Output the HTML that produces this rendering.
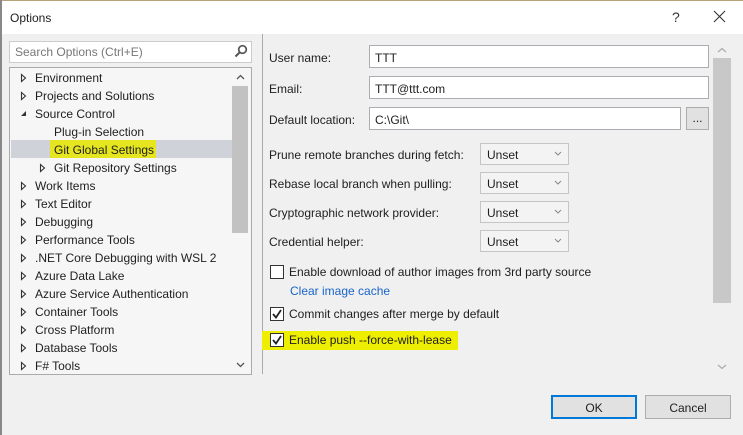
<!DOCTYPE html>
<html><head><meta charset="utf-8"><style>
*{box-sizing:border-box;margin:0;padding:0}
body{width:743px;height:435px;overflow:hidden;background:#f0f0f0;font-family:"Liberation Sans",sans-serif;font-size:12px;color:#1e1e1e;position:relative}
.a{position:absolute;white-space:nowrap}
.tb{position:absolute;background:#fff;border:1px solid #abadb3}
.dd{position:absolute;width:89px;height:22px;background:#f3f3f3;border:1px solid #c5c5c5;padding:4px 0 0 6px}
.cb{position:absolute;width:14px;height:14px;border:1px solid #333;background:#fff}
.tri{position:absolute;left:20px}
.btn{position:absolute;height:24px;background:#e1e1e1;border:1px solid #adadad;text-align:center;padding-top:5px}
</style></head><body>
<div class="a" style="left:0;top:0;width:743px;height:34px;background:#fff;border-top:1px solid #b8a47c"></div>
<div class="a" style="left:0;top:0;width:2px;height:435px;background:#888"></div>
<div class="a" style="left:10px;top:11px">Options</div>
<div class="a" style="left:672px;top:9px;font-size:14px;color:#333">?</div>
<svg class="a" style="left:713px;top:10px" width="13" height="13"><path d="M1 1L12 12M12 1L1 12" stroke="#333" stroke-width="1.1"/></svg>

<div class="tb" style="left:9px;top:41px;width:243px;height:22px;border-color:#ccc"></div>
<div class="a" style="left:15px;top:45px;color:#777">Search Options (Ctrl+E)</div>
<svg class="a" style="left:233px;top:43px" width="16" height="16"><circle cx="9.5" cy="6.5" r="3.8" fill="none" stroke="#555" stroke-width="1.7"/><line x1="7" y1="9" x2="2.5" y2="13.5" stroke="#555" stroke-width="2"/></svg>

<div class="a" style="left:9px;top:67px;width:243px;height:308px;background:#f6f6f6;border:1px solid #aaa"></div>
<div class="a" style="left:232px;top:86px;width:16px;height:147px;background:#c2c2c2"></div>
<svg class="a" style="left:236px;top:74px" width="9" height="6"><path d="M1 5L4.5 1.5L8 5" fill="none" stroke="#555" stroke-width="1.3"/></svg>
<svg class="a" style="left:236px;top:362px" width="9" height="6"><path d="M1 1L4.5 4.5L8 1" fill="none" stroke="#555" stroke-width="1.3"/></svg>
<div class="a" style="left:11px;top:140px;width:221px;height:18px;background:#cfd2d9"></div>
<div class="a" style="left:50px;top:140px;width:106px;height:18px;background:#e6e620"></div>

<svg width="0" height="0" style="position:absolute"><defs><symbol id="t" viewBox="0 0 7 10"><path d="M1.5 1.5L5.5 5L1.5 8.5Z" fill="none" stroke="#333" stroke-width="1.1"/></symbol></defs></svg>
<svg class="tri" style="top:73px" width="7" height="10"><use href="#t"/></svg><div class="a" style="left:35px;top:71px">Environment</div>
<svg class="tri" style="top:91px" width="7" height="10"><use href="#t"/></svg><div class="a" style="left:35px;top:89px">Projects and Solutions</div>
<svg class="a" style="left:20px;top:110px" width="7" height="7"><path d="M6 1L6 6L1 6Z" fill="#333"/></svg><div class="a" style="left:35px;top:107px">Source Control</div>
<div class="a" style="left:54px;top:125px">Plug-in Selection</div>
<div class="a" style="left:54px;top:143px">Git Global Settings</div>
<svg class="tri" style="top:163px;left:39px" width="7" height="10"><use href="#t"/></svg><div class="a" style="left:54px;top:161px">Git Repository Settings</div>
<svg class="tri" style="top:181px" width="7" height="10"><use href="#t"/></svg><div class="a" style="left:35px;top:179px">Work Items</div>
<svg class="tri" style="top:199px" width="7" height="10"><use href="#t"/></svg><div class="a" style="left:35px;top:197px">Text Editor</div>
<svg class="tri" style="top:217px" width="7" height="10"><use href="#t"/></svg><div class="a" style="left:35px;top:215px">Debugging</div>
<svg class="tri" style="top:235px" width="7" height="10"><use href="#t"/></svg><div class="a" style="left:35px;top:233px">Performance Tools</div>
<svg class="tri" style="top:253px" width="7" height="10"><use href="#t"/></svg><div class="a" style="left:35px;top:251px">.NET Core Debugging with WSL 2</div>
<svg class="tri" style="top:271px" width="7" height="10"><use href="#t"/></svg><div class="a" style="left:35px;top:269px">Azure Data Lake</div>
<svg class="tri" style="top:289px" width="7" height="10"><use href="#t"/></svg><div class="a" style="left:35px;top:287px">Azure Service Authentication</div>
<svg class="tri" style="top:307px" width="7" height="10"><use href="#t"/></svg><div class="a" style="left:35px;top:305px">Container Tools</div>
<svg class="tri" style="top:325px" width="7" height="10"><use href="#t"/></svg><div class="a" style="left:35px;top:323px">Cross Platform</div>
<svg class="tri" style="top:343px" width="7" height="10"><use href="#t"/></svg><div class="a" style="left:35px;top:341px">Database Tools</div>
<svg class="tri" style="top:361px" width="7" height="10"><use href="#t"/></svg><div class="a" style="left:35px;top:359px">F# Tools</div>

<div class="a" style="left:262px;top:34px;width:1px;height:340px;background:#aaa"></div>
<div class="a" style="left:269px;top:51px">User name:</div>
<div class="tb" style="left:369px;top:45px;width:340px;height:23px"></div><div class="a" style="left:375px;top:51px">TTT</div>
<div class="a" style="left:269px;top:82px">Email:</div>
<div class="tb" style="left:369px;top:76px;width:340px;height:23px"></div><div class="a" style="left:375px;top:82px">TTT@ttt.com</div>
<div class="a" style="left:269px;top:113px">Default location:</div>
<div class="tb" style="left:369px;top:107px;width:312px;height:23px"></div><div class="a" style="left:375px;top:113px">C:\Git\</div>
<div class="btn" style="left:686px;top:107px;width:23px;height:23px;padding-top:3px">...</div>
<div class="a" style="left:713px;top:58px;width:18px;height:245px;background:#c8c8c8"></div>
<svg class="a" style="left:717px;top:47px" width="10" height="6"><path d="M1 5L5 1.5L9 5" fill="none" stroke="#aaa" stroke-width="1.2"/></svg>
<svg class="a" style="left:717px;top:364px" width="10" height="6"><path d="M1 1L5 4.5L9 1" fill="none" stroke="#aaa" stroke-width="1.2"/></svg>

<svg width="0" height="0" style="position:absolute"><defs><symbol id="v" viewBox="0 0 8 5"><path d="M1 1L4 4L7 1" fill="none" stroke="#888" stroke-width="1"/></symbol></defs></svg>
<div class="a" style="left:269px;top:148px">Prune remote branches during fetch:</div><div class="dd" style="left:480px;top:143px">Unset</div><svg class="a" style="left:554px;top:151px" width="8" height="5"><use href="#v"/></svg>
<div class="a" style="left:269px;top:177px">Rebase local branch when pulling:</div><div class="dd" style="left:480px;top:172px">Unset</div><svg class="a" style="left:554px;top:180px" width="8" height="5"><use href="#v"/></svg>
<div class="a" style="left:269px;top:206px">Cryptographic network provider:</div><div class="dd" style="left:480px;top:201px">Unset</div><svg class="a" style="left:554px;top:209px" width="8" height="5"><use href="#v"/></svg>
<div class="a" style="left:269px;top:235px">Credential helper:</div><div class="dd" style="left:480px;top:230px">Unset</div><svg class="a" style="left:554px;top:238px" width="8" height="5"><use href="#v"/></svg>

<div class="cb" style="left:270px;top:265px"></div><div class="a" style="left:289px;top:265px">Enable download of author images from 3rd party source</div>
<div class="a" style="left:290px;top:284px;color:#1a64c8">Clear image cache</div>
<div class="cb" style="left:270px;top:307px"></div><svg class="a" style="left:272px;top:309px" width="10" height="10"><path d="M1 5L4 8.5L9 1" fill="none" stroke="#222" stroke-width="1.8"/></svg><div class="a" style="left:289px;top:307px">Commit changes after merge by default</div>
<div class="a" style="left:262px;top:331px;width:196px;height:19px;background:#eeee00"></div>
<div class="cb" style="left:270px;top:333px"></div><svg class="a" style="left:272px;top:335px" width="10" height="10"><path d="M1 5L4 8.5L9 1" fill="none" stroke="#222" stroke-width="1.8"/></svg><div class="a" style="left:289px;top:333px">Enable push --force-with-lease</div>

<div class="btn" style="left:551px;top:395px;width:86px;border:2px solid #0078d7;padding-top:4px">OK</div>
<div class="btn" style="left:645px;top:395px;width:86px">Cancel</div>
</body></html>
